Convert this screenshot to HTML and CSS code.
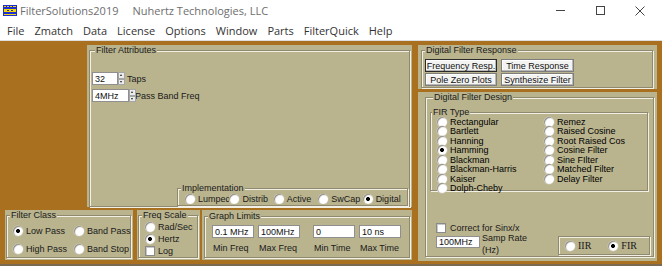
FILE: index.html
```html
<!DOCTYPE html>
<html lang="en">
<head>
  <meta charset="UTF-8">
  <title>FilterSolutions2019</title>
  <link rel="stylesheet" href="styles.css">
</head>
<body>
  <div class="window">
    <header class="titlebar">
      <svg class="app-icon" width="14" height="11" viewBox="0 0 14 11">
        <rect width="14" height="11" fill="#1d2fd2"/>
        <rect x="1" y="1" width="2" height="1" fill="#e9d21c"/>
        <rect x="4" y="1" width="2" height="1" fill="#e9d21c"/>
        <rect x="7" y="1" width="2" height="1" fill="#e9d21c"/>
        <rect x="10" y="1" width="3" height="1" fill="#e9d21c"/>
        <rect x="1" y="4" width="12" height="3" fill="#f1d600"/>
        <rect x="4" y="5" width="2" height="1" fill="#1d2fd2"/>
        <rect x="8" y="5" width="2" height="1" fill="#1d2fd2"/>
        <rect x="1" y="9" width="12" height="1" fill="#e9d21c"/>
      </svg>
      <span class="app-name">FilterSolutions2019</span>
      <span class="company">Nuhertz Technologies, LLC</span>
      <div class="win-controls">
        <span class="win-btn"><span class="min-glyph"></span></span>
        <span class="win-btn"><span class="max-glyph"></span></span>
        <span class="win-btn">
          <svg width="10" height="10" viewBox="0 0 10 10"><path d="M0.5 0.5 L9.5 9.5 M9.5 0.5 L0.5 9.5" stroke="#444" stroke-width="1"/></svg>
        </span>
      </div>
    </header>

    <nav class="menubar">
      <span>File</span>
      <span>Zmatch</span>
      <span>Data</span>
      <span>License</span>
      <span>Options</span>
      <span>Window</span>
      <span>Parts</span>
      <span>FilterQuick</span>
      <span>Help</span>
    </nav>

    <main class="workspace">
      <div class="left-col">
        <section class="panel attributes">
          <fieldset class="group attr-group">
            <legend>Filter Attributes</legend>
            <div class="spin-row first">
              <div class="spin">
                <input class="field taps" value="32">
                <span class="spin-btns"><span class="up"></span><span class="dn"></span></span>
              </div>
              <label class="spin-label">Taps</label>
            </div>
            <div class="spin-row">
              <div class="spin">
                <input class="field band" value="4MHz">
                <span class="spin-btns"><span class="up"></span><span class="dn"></span></span>
              </div>
              <label class="spin-label overlap">Pass Band Freq</label>
            </div>

            <fieldset class="group impl">
              <legend>Implementation</legend>
              <div class="impl-row">
                <label class="opt"><span class="radio"></span>Lumped</label>
                <label class="opt"><span class="radio"></span>Distrib</label>
                <label class="opt"><span class="radio"></span>Active</label>
                <label class="opt"><span class="radio"></span>SwCap</label>
                <label class="opt"><span class="radio on"></span>Digital</label>
              </div>
            </fieldset>
          </fieldset>
        </section>

        <div class="bottom-row">
          <section class="panel class-panel">
            <fieldset class="group">
              <legend>Filter Class</legend>
              <div class="class-grid">
                <label class="opt"><span class="radio on"></span>Low Pass</label>
                <label class="opt"><span class="radio"></span>Band Pass</label>
                <label class="opt"><span class="radio"></span>High Pass</label>
                <label class="opt"><span class="radio"></span>Band Stop</label>
              </div>
            </fieldset>
          </section>

          <section class="panel scale-panel">
            <fieldset class="group">
              <legend>Freq Scale</legend>
              <div class="scale-list">
                <label class="opt"><span class="radio"></span>Rad/Sec</label>
                <label class="opt"><span class="radio on"></span>Hertz</label>
                <label class="opt"><span class="check"></span>Log</label>
              </div>
            </fieldset>
          </section>

          <section class="panel limits-panel">
            <fieldset class="group">
              <legend>Graph Limits</legend>
              <div class="limits-grid">
                <input class="field" value="0.1 MHz">
                <input class="field" value="100MHz">
                <input class="field" value="0">
                <input class="field" value="10 ns">
                <span class="limit-label">Min Freq</span>
                <span class="limit-label">Max Freq</span>
                <span class="limit-label">Min Time</span>
                <span class="limit-label">Max Time</span>
              </div>
            </fieldset>
          </section>
        </div>
      </div>

      <div class="right-col">
        <section class="panel response-panel">
          <fieldset class="group">
            <legend>Digital Filter Response</legend>
            <div class="btn-grid">
              <button class="btn focus">Frequency Resp.</button>
              <button class="btn">Time Response</button>
              <button class="btn">Pole Zero Plots</button>
              <button class="btn">Synthesize Filter</button>
            </div>
          </fieldset>
        </section>

        <section class="panel design-panel">
          <fieldset class="group design-group">
            <legend>Digital Filter Design</legend>
            <fieldset class="group fir-group">
              <legend>FIR Type</legend>
              <div class="fir-list">
                <label class="opt"><span class="radio"></span>Rectangular</label>
                <label class="opt"><span class="radio"></span>Bartlett</label>
                <label class="opt"><span class="radio"></span>Hanning</label>
                <label class="opt"><span class="radio on"></span>Hamming</label>
                <label class="opt"><span class="radio"></span>Blackman</label>
                <label class="opt"><span class="radio"></span>Blackman-Harris</label>
                <label class="opt"><span class="radio"></span>Kaiser</label>
                <label class="opt"><span class="radio"></span>Dolph-Cheby</label>
                <label class="opt"><span class="radio"></span>Remez</label>
                <label class="opt"><span class="radio"></span>Raised Cosine</label>
                <label class="opt"><span class="radio"></span>Root Raised Cos</label>
                <label class="opt"><span class="radio"></span>Cosine Filter</label>
                <label class="opt"><span class="radio"></span>Sine FIlter</label>
                <label class="opt"><span class="radio"></span>Matched Filter</label>
                <label class="opt"><span class="radio"></span>Delay Filter</label>
              </div>
            </fieldset>

            <label class="opt sinx-row"><span class="check"></span>Correct for Sinx/x</label>
            <div class="samp-row">
              <input class="field samp" value="100MHz">
              <span class="samp-label">Samp Rate<br>(Hz)</span>
              <div class="group kind-box">
                <label class="opt serif"><span class="radio"></span>IIR</label>
                <label class="opt serif"><span class="radio on"></span>FIR</label>
              </div>
            </div>
          </fieldset>
        </section>
      </div>
    </main>
  </div>
</body>
</html>
```

FILE: styles.css
```css
* {
  margin: 0;
  padding: 0;
  box-sizing: border-box;
}

body {
  width: 662px;
  height: 266px;
  overflow: hidden;
  background: #7a6a52;
  font-family: 'Liberation Sans', Arial, sans-serif;
  font-size: 9px;
  color: #1a1a1a;
}

.window {
  display: flex;
  flex-direction: column;
  height: 264px;
}

/* title bar + menu */

.titlebar {
  height: 21px;
  background: #fff;
  display: flex;
  align-items: center;
  font-family: 'Open Sans', sans-serif;
  font-size: 11px;
  color: #6e6e6e;
}

.app-icon {
  margin: 0 3px 0 3px;
}

.app-name {
  margin-right: 14px;
}

.win-controls {
  margin-left: auto;
  margin-right: 2px;
  display: flex;
}

.win-btn {
  width: 40px;
  height: 21px;
  display: flex;
  align-items: center;
  justify-content: center;
}

.min-glyph {
  width: 9px;
  height: 1px;
  background: #444;
}

.max-glyph {
  width: 9px;
  height: 9px;
  border: 1px solid #444;
}

.menubar {
  height: 20px;
  background: #fff;
  border-bottom: 1px solid #dedede;
  display: flex;
  align-items: center;
  gap: 10px;
  padding-left: 7px;
  font-family: 'Open Sans', sans-serif;
  font-size: 11px;
  color: #333;
}

/* brown workspace */

.workspace {
  flex: 1;
  background: #a8701f;
  display: grid;
  grid-template-columns: 407px 239px;
  column-gap: 6px;
  padding: 4px 5px 0 5px;
}

.left-col {
  display: flex;
  flex-direction: column;
  gap: 3px;
}

.right-col {
  display: flex;
  flex-direction: column;
  gap: 3px;
}

.panel {
  background: #b9b38e;
  display: flex;
  flex-direction: column;
}

.group {
  border: 1px solid #8e896f;
  box-shadow: inset 1px 1px 0 #f2f0e4, 1px 1px 0 #f2f0e4;
  min-width: 0;
  padding: 0;
}

.group legend {
  margin-left: 3px;
  padding: 0 1px;
  line-height: 10px;
  background: #b9b38e;
}

/* radio / check */

.opt {
  display: flex;
  align-items: center;
  gap: 3px;
  white-space: nowrap;
  height: 10px;
  line-height: 10px;
}

.radio {
  flex: none;
  width: 10px;
  height: 10px;
  border-radius: 50%;
  background: #fff;
  box-shadow: inset 1px 1px 1px #8c8a80, 0 0 0 0.5px #cfccbc;
}

.radio.on {
  background: radial-gradient(circle, #000 0 1.6px, #fff 2.3px);
}

.check {
  flex: none;
  width: 10px;
  height: 10px;
  background: #fff;
  border: 1px solid #8a8a8a;
  box-shadow: inset 1px 1px 0 #c8c8c8;
}

.field {
  height: 13px;
  border: 1px solid #8f8f8f;
  background: #fff;
  font-family: inherit;
  font-size: 9px;
  color: #111;
  padding: 0 2px;
  outline: none;
}

/* filter attributes */

.attributes {
  height: 162px;
  margin-left: 82px;
  padding: 0 2px 0 2px;
}

.attr-group {
  flex: 1;
  padding: 0 1px 0 2px;
}

.spin-row {
  display: flex;
  align-items: center;
  margin-top: 4px;
}

.spin-row.first {
  margin-top: 17px;
}

.spin {
  display: flex;
}

.field.taps {
  width: 26px;
}

.field.band {
  width: 37px;
}

.spin-btns {
  width: 7px;
  height: 13px;
  display: flex;
  flex-direction: column;
}

.spin-btns span {
  flex: 1;
  background: #ececec;
  border: 1px solid #a5a5a5;
  position: relative;
}

.spin-btns .up::after,
.spin-btns .dn::after {
  content: '';
  position: absolute;
  left: 1px;
  top: 1px;
  border-left: 1.5px solid transparent;
  border-right: 1.5px solid transparent;
}

.spin-btns .up::after {
  border-bottom: 2px solid #222;
}

.spin-btns .dn::after {
  border-top: 2px solid #222;
}

.spin-label {
  margin-left: 2px;
}

.spin-label.overlap {
  margin-left: -1px;
}

.impl {
  margin: 81px 0 0 auto;
  width: 231px;
}

.impl-row {
  display: flex;
  padding: 1px 0 1px 7px;
}

.impl-row .opt {
  width: 44.5px;
  overflow: hidden;
}

/* bottom row */

.bottom-row {
  height: 50px;
  display: flex;
}

.class-panel {
  width: 128px;
  padding: 0 2px 2px 1px;
}

.class-panel .group,
.scale-panel .group,
.limits-panel .group {
  flex: 1;
}

.class-grid {
  display: grid;
  grid-template-columns: 61px auto;
  row-gap: 8px;
  padding: 6px 0 0 6px;
}

.scale-panel {
  width: 63px;
  margin-left: 4px;
  padding: 0 2px 2px 1px;
}

.scale-list {
  display: flex;
  flex-direction: column;
  gap: 2px;
  padding: 2px 0 0 6px;
}

.limits-panel {
  width: 210px;
  margin-left: 2px;
  padding: 1px 2px 2px 2px;
}

.limits-grid {
  display: grid;
  grid-template-columns: 46px 55px 46px 42px;
  row-gap: 5px;
  padding: 4px 0 0 7px;
}

.limits-grid .field {
  width: 42px;
}

.limit-label {
  padding-left: 1px;
  line-height: 10px;
}

/* right column */

.response-panel {
  height: 44px;
  padding: 0 4px 1px 3px;
}

.response-panel .group {
  flex: 1;
}

.btn-grid {
  display: grid;
  grid-template-columns: 72px 73px;
  column-gap: 4px;
  row-gap: 1px;
  padding: 4px 0 0 3px;
}

.btn {
  height: 13px;
  padding: 0;
  background: #f3f3f1;
  border: 1px solid #7d7d7d;
  box-shadow: inset -1px -1px 0 #b7b7b7, inset 1px 1px 0 #fff;
  font-family: inherit;
  font-size: 9px;
  color: #111;
  white-space: nowrap;
  overflow: hidden;
}

.btn.focus {
  border-color: #2a2a2a;
}

.design-panel {
  height: 169px;
  padding: 0 3px 0 7px;
}

.design-group {
  padding: 0 0 0 4px;
}

.fir-group {
  margin-top: 5px;
  width: 218px;
}

.fir-group legend {
  margin-left: 1px;
}

.fir-list {
  display: grid;
  grid-auto-flow: column;
  grid-template-rows: repeat(8, 9.5px);
  grid-template-columns: 107px auto;
  padding-left: 6px;
  margin-bottom: -3px;
  color: #000;
}

.fir-list .opt {
  height: 9.5px;
}

.sinx-row {
  margin: 32px 0 0 6px;
  gap: 4px;
}

.samp-row {
  display: flex;
  align-items: flex-start;
  margin-left: 6px;
}

.field.samp {
  width: 44px;
  height: 12px;
  margin-top: 3px;
}

.samp-label {
  margin: -1px 0 0 2px;
  line-height: 12px;
}

.kind-box {
  margin: 3px 3px 0 auto;
  width: 92px;
  height: 19px;
  display: flex;
  align-items: center;
  padding-left: 6px;
  gap: 17px;
}

.serif {
  font-family: 'Liberation Serif', 'Times New Roman', serif;
  font-size: 10px;
}
```
